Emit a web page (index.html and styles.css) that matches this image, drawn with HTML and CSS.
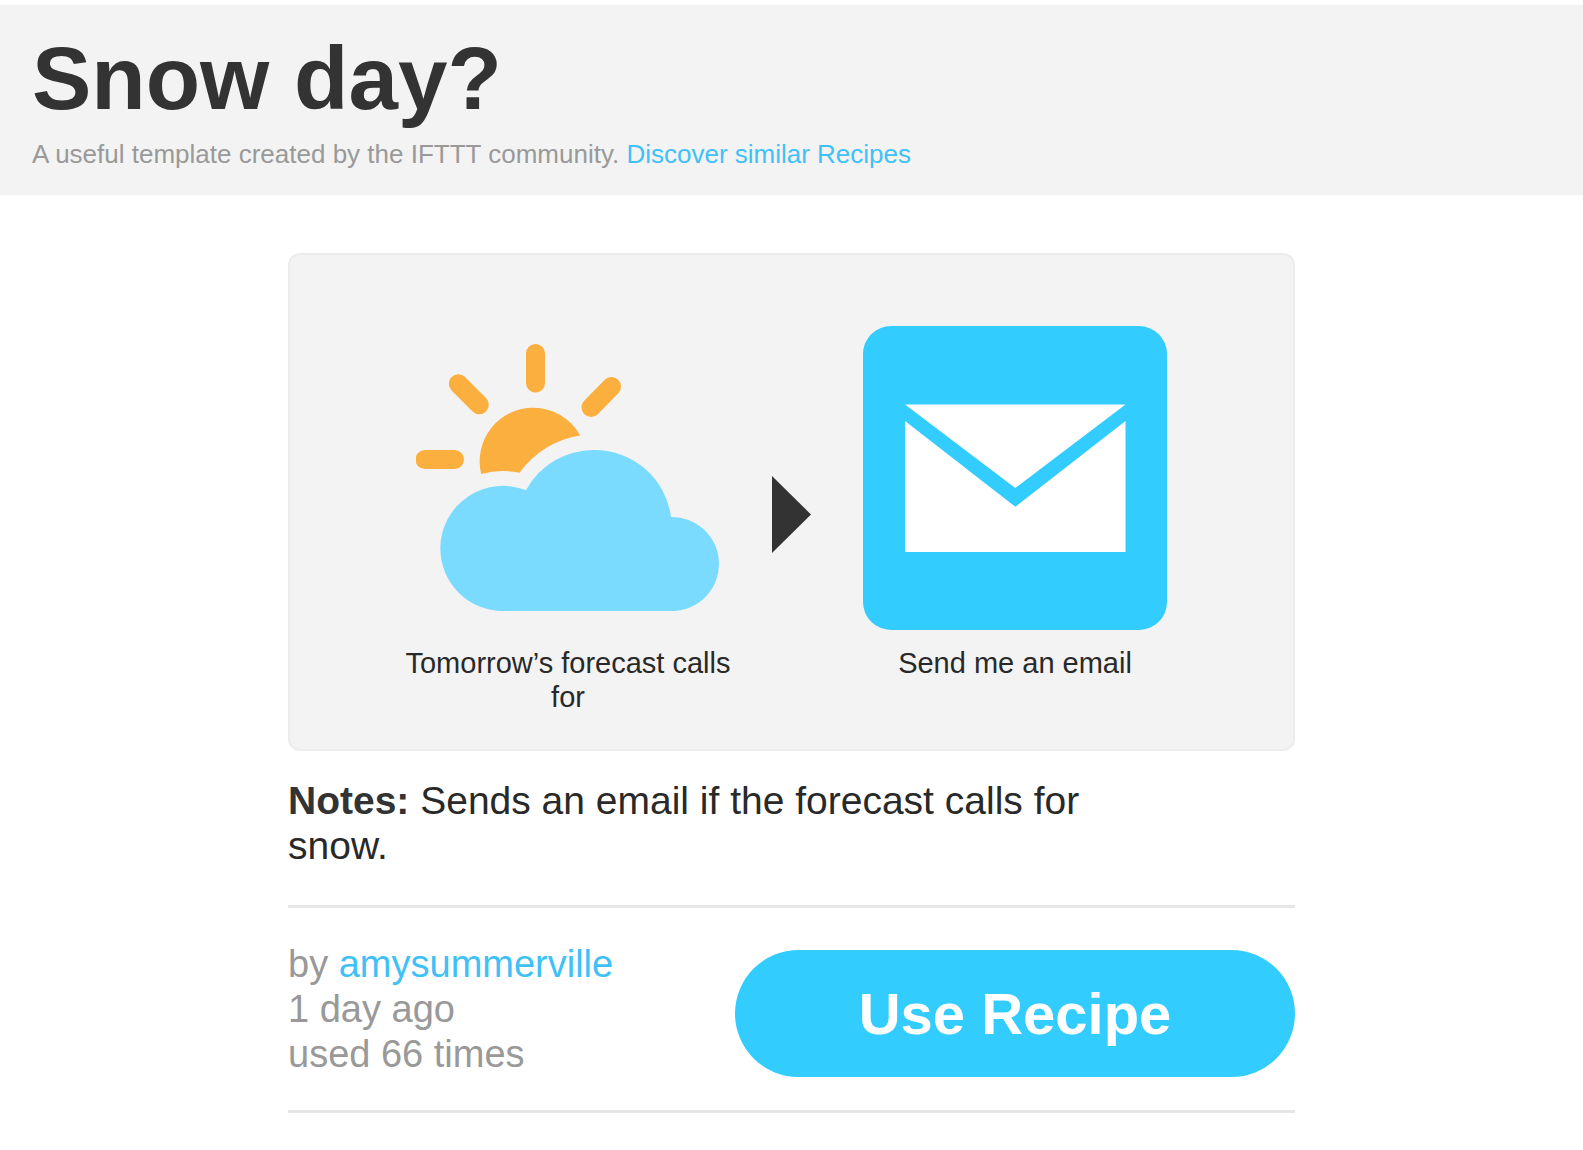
FILE: index.html
```html
<!DOCTYPE html>
<html lang="en">
<head>
    <meta charset="UTF-8">
    <meta name="viewport" content="width=device-width, initial-scale=1.0">
    <title>Snow day?</title>
    <link rel="stylesheet" href="styles.css">
</head>
<body>
    <header class="page-header">
        <h1>Snow day?</h1>
        <p>A useful template created by the IFTTT community. <a href="#">Discover similar Recipes</a></p>
    </header>
    <main class="recipe">
        <section class="card">
            <figure class="step">
                <svg class="icon" viewBox="0 0 304 304" aria-hidden="true">
                    <!-- sun rays -->
                    <g stroke="#fbaf3f" stroke-width="19" stroke-linecap="round">
                        <path d="M9 133.5H38.5"/>
                        <path d="M42.3 57.7L63.3 78.7"/>
                        <path d="M119.5 27.5V57"/>
                        <path d="M195.5 60.5L175 81.5"/>
                    </g>
                    <path fill="#fbaf3f" d="M65.2 148.1A53.5 53.5 0 0 1 117.5 81.8A53.5 53.5 0 0 1 164.2 109.5A91.5 91.5 0 0 0 103.5 146.8A78 78 0 0 0 65.2 148.1Z"/>
                    <!-- cloud -->
                    <path fill="#7adbff" d="M87 285A62.7 62.7 0 0 1 24.3 222.3A62.7 62.7 0 0 1 110 164.2A77 77 0 0 1 178.5 124A77 77 0 0 1 255 191A47 47 0 0 1 257 285Z"/>
                </svg>
                <figcaption>Tomorrow’s forecast calls for</figcaption>
            </figure>
            <svg class="arrow" viewBox="0 0 39 77" aria-hidden="true">
                <path fill="#333" d="M0 0L39 38.5L0 77Z"/>
            </svg>
            <figure class="step">
                <svg class="icon" viewBox="0 0 304 304" aria-hidden="true">
                    <rect width="304" height="304" rx="28" fill="#33ccff"/>
                    <path fill="#fff" d="M42 78.5H262.5L152.3 162Z"/>
                    <path fill="#fff" d="M42 95L152.3 180.8L262.5 95V226H42Z"/>
                </svg>
                <figcaption>Send me an email</figcaption>
            </figure>
        </section>
        <p class="notes"><strong>Notes:</strong> Sends an email if the forecast calls for snow.</p>
        <section class="bottom">
            <ul class="info">
                <li>by <a href="#">amysummerville</a></li>
                <li>1 day ago</li>
                <li>used 66 times</li>
            </ul>
            <button type="button" class="use">Use Recipe</button>
        </section>
    </main>
</body>
</html>
```
FILE: styles.css
```css
*{
    box-sizing: border-box;
    margin: 0;
    padding: 0;
}

body{
    font-family: "Liberation Sans", Arial, sans-serif;
    background-color: #fff;
    color: #292929;
}

a{
    color: #3fc1f7;
    text-decoration: none;
}

.page-header{
    margin-top: 5px;
    padding: 21px 32px;
    background-color: #f3f3f3;
    color: #999;
}

.page-header h1{
    margin-bottom: 4px;
    font-size: 89px;
    line-height: 104px;
    color: #333;
}

.page-header p{
    font-size: 26px;
    line-height: 40px;
}

.recipe{
    max-width: 1039px;
    margin: 0 auto;
    padding: 58px 16px 32px;
}

.card{
    display: flex;
    justify-content: center;
    align-items: flex-start;
    gap: 28px;
    padding: 71px 28px 35px;
    border: 2px solid #ececec;
    border-radius: 12px;
    background-color: #f3f3f3;
}

.step{
    width: 352px;
    text-align: center;
}

.icon{
    display: block;
    width: 100%;
    max-width: 304px;
    margin: 0 auto 16px;
}

.step figcaption{
    font-size: 29px;
    line-height: 34px;
}

.arrow{
    flex: none;
    width: 39px;
    margin-top: 150px;
}

.notes{
    max-width: 840px;
    margin: 27px 0 37px;
    font-size: 39px;
    line-height: 45px;
}

.notes strong{
    color: #333;
}

.bottom{
    display: flex;
    justify-content: space-between;
    align-items: flex-end;
    gap: 28px;
    padding: 34px 0 33px;
    border-top: 3px solid #e6e6e6;
    border-bottom: 3px solid #e6e6e6;
}

.info{
    list-style-type: none;
    font-size: 38px;
    line-height: 45px;
    color: #999;
}

.use{
    width: 560px;
    padding: 30px 28px;
    border: none;
    border-radius: 64px;
    background-color: #33ccff;
    color: #fff;
    font-family: inherit;
    font-size: 58px;
    font-weight: bold;
    line-height: 67px;
    cursor: pointer;
}
```
